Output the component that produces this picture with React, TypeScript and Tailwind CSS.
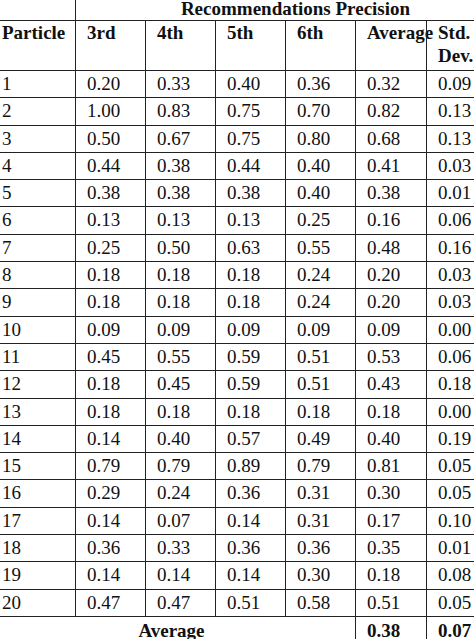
const rows: string[][] = [
  ["1", "0.20", "0.33", "0.40", "0.36", "0.32", "0.09"],
  ["2", "1.00", "0.83", "0.75", "0.70", "0.82", "0.13"],
  ["3", "0.50", "0.67", "0.75", "0.80", "0.68", "0.13"],
  ["4", "0.44", "0.38", "0.44", "0.40", "0.41", "0.03"],
  ["5", "0.38", "0.38", "0.38", "0.40", "0.38", "0.01"],
  ["6", "0.13", "0.13", "0.13", "0.25", "0.16", "0.06"],
  ["7", "0.25", "0.50", "0.63", "0.55", "0.48", "0.16"],
  ["8", "0.18", "0.18", "0.18", "0.24", "0.20", "0.03"],
  ["9", "0.18", "0.18", "0.18", "0.24", "0.20", "0.03"],
  ["10", "0.09", "0.09", "0.09", "0.09", "0.09", "0.00"],
  ["11", "0.45", "0.55", "0.59", "0.51", "0.53", "0.06"],
  ["12", "0.18", "0.45", "0.59", "0.51", "0.43", "0.18"],
  ["13", "0.18", "0.18", "0.18", "0.18", "0.18", "0.00"],
  ["14", "0.14", "0.40", "0.57", "0.49", "0.40", "0.19"],
  ["15", "0.79", "0.79", "0.89", "0.79", "0.81", "0.05"],
  ["16", "0.29", "0.24", "0.36", "0.31", "0.30", "0.05"],
  ["17", "0.14", "0.07", "0.14", "0.31", "0.17", "0.10"],
  ["18", "0.36", "0.33", "0.36", "0.36", "0.35", "0.01"],
  ["19", "0.14", "0.14", "0.14", "0.30", "0.18", "0.08"],
  ["20", "0.47", "0.47", "0.51", "0.58", "0.51", "0.05"],
];

const grid = "grid grid-cols-[75px_70px_70px_70px_70px_71px_89px]";
const line = "border-[#222]";

export default function App() {
  return (
    <div className="w-[474px] h-[639px] overflow-hidden bg-white text-[#111] text-[19px] font-['Liberation_Serif','Times_New_Roman',serif]">
      <div className="w-[515px]">
        {/* top header */}
        <div className={`${grid} h-[21px] border-b ${line}`}>
          <div />
          <div className={`col-span-6 border-l ${line} text-center font-bold leading-[18px]`}>
            Recommendations Precision
          </div>
        </div>

        {/* column header */}
        <div className={`${grid} h-[50px] border-b ${line} font-bold leading-[23px]`}>
          <div className="pl-[2px]">Particle</div>
          {["3rd", "4th", "5th", "6th"].map((h) => (
            <div key={h} className={`border-l ${line} pl-[11px]`}>
              {h}
            </div>
          ))}
          <div className={`border-l ${line} pl-[11px] whitespace-nowrap`}>Average</div>
          <div className={`border-l ${line} pl-[11px]`}>
            Std.
            <br />
            Dev.
          </div>
        </div>

        {rows.map((r) => (
          <div key={r[0]} className={`${grid} h-[27.3px] border-b ${line} leading-[26px]`}>
            {r.map((v, i) => (
              <div
                key={i}
                className={i === 0 ? "pl-[2px]" : `border-l ${line} pl-[11px]`}
              >
                {v}
              </div>
            ))}
          </div>
        ))}

        {/* average row */}
        <div className={`${grid} h-[28px] font-bold leading-[27px]`}>
          <div className="col-span-5 text-center pr-[12px]">Average</div>
          <div className={`border-l ${line} pl-[11px]`}>0.38</div>
          <div className={`border-l ${line} pl-[11px]`}>0.07</div>
        </div>
      </div>
    </div>
  );
}
